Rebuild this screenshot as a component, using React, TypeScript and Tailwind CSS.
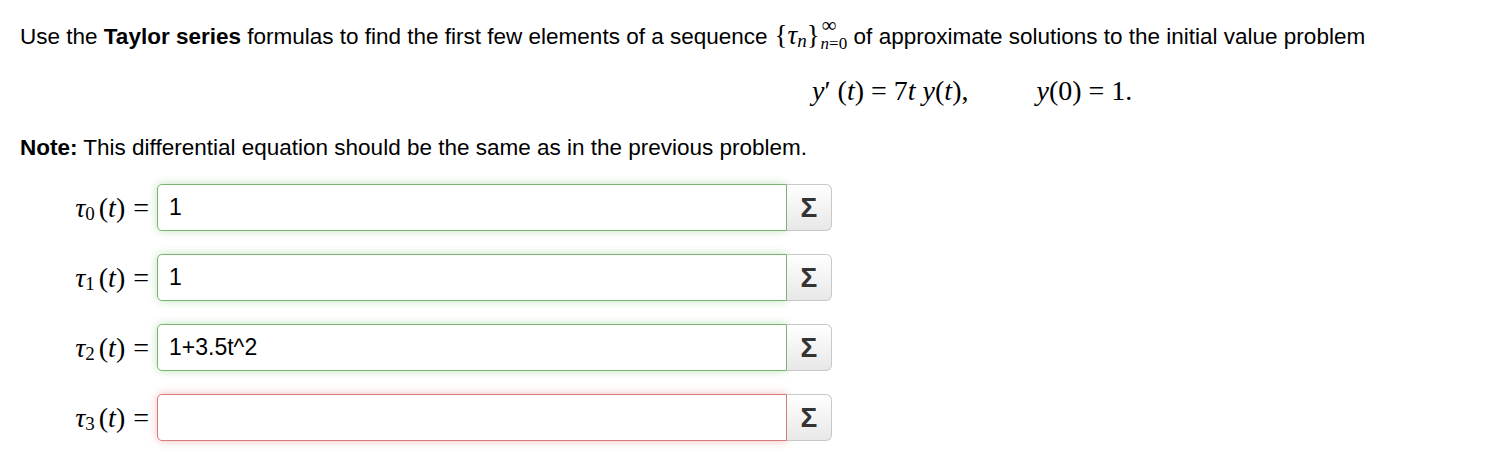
const SANS = "font-['Helvetica','Liberation_Sans',Arial,sans-serif]";
const SERIF = "font-['Liberation_Serif','Times_New_Roman',serif]";

type Row = { n: number; value: string; ok: boolean };

const ROWS: Row[] = [
	{ n: 0, value: "1", ok: true },
	{ n: 1, value: "1", ok: true },
	{ n: 2, value: "1+3.5t^2", ok: true },
	{ n: 3, value: "", ok: false },
];

function Tau({ n }: { n: number }) {
	return (
		<span className={`${SERIF} text-[28px] text-black whitespace-nowrap`}>
			<i>τ</i>
			<sub className="text-[19px] relative top-[3px] align-baseline">{n}</sub>
			<span className="ml-[4px]">(</span>
			<i>t</i>
			<span>)</span>
			<span className="ml-[8px]">=</span>
		</span>
	);
}

function AnswerRow({ row }: { row: Row }) {
	const border = row.ok
		? "border-[#78b56e] shadow-[0_0_9px_rgba(120,190,110,0.45)]"
		: "border-[#d77a7a] shadow-[0_0_9px_rgba(220,110,110,0.45)]";
	return (
		<div className="flex items-center h-[47px]">
			<div className="w-[157px] flex justify-end pr-[8px]">
				<Tau n={row.n} />
			</div>
			<div
				className={`w-[630px] h-[47px] border bg-white rounded-l-[5px] flex items-center pl-[11px] text-[23px] text-black ${SANS} ${border}`}
			>
				{row.value}
			</div>
			<div className="w-[45px] h-[47px] border border-l-0 border-[#c8c8c8] rounded-r-[6px] bg-gradient-to-b from-white to-[#e8e8e8] flex items-center justify-center">
				<span className={`${SANS} font-black text-[28px] leading-none text-[#333]`}>Σ</span>
			</div>
		</div>
	);
}

export default function App() {
	return (
		<div className={`w-[1508px] h-[472px] bg-white text-black ${SANS} pt-[19px]`}>
			<p className="pl-[20px] text-[22.5px] leading-[32px] flex items-baseline">
				<span>
					Use the <b>Taylor series</b> formulas to find the first few elements of a sequence
				</span>
				<span className={`${SERIF} text-[27px] ml-[7px] inline-flex items-baseline`}>
					{"{"}
					<i>τ</i>
					<sub className="text-[19px] relative top-[3px] align-baseline">
						<i>n</i>
					</sub>
					{"}"}
					<span className="relative inline-block w-[28px] self-stretch">
						<span className="absolute left-[2px] top-[-4px] text-[21px] leading-none">∞</span>
						<span className="absolute left-[1px] top-[16px] text-[17px] leading-none whitespace-nowrap">
							<i>n</i>=0
						</span>
					</span>
				</span>
				<span className="ml-[6px]">of approximate solutions to the initial value problem</span>
			</p>
			<div className={`${SERIF} text-[28px] h-[58px] flex items-center pl-[812px] mt-[9px]`}>
				<span>
					<i>y</i>′ (<i>t</i>) = 7<i>t</i> <i>y</i>(<i>t</i>),
				</span>
				<span className="ml-[68px]">
					<i>y</i>(0) = 1.
				</span>
			</div>
			<p className="pl-[20px] text-[22.5px] leading-[32px] mt-[12px]">
				<b>Note:</b> This differential equation should be the same as in the previous problem.
			</p>
			<div className="flex flex-col gap-[23px] mt-[20px]">
				{ROWS.map((row) => (
					<AnswerRow key={row.n} row={row} />
				))}
			</div>
		</div>
	);
}
